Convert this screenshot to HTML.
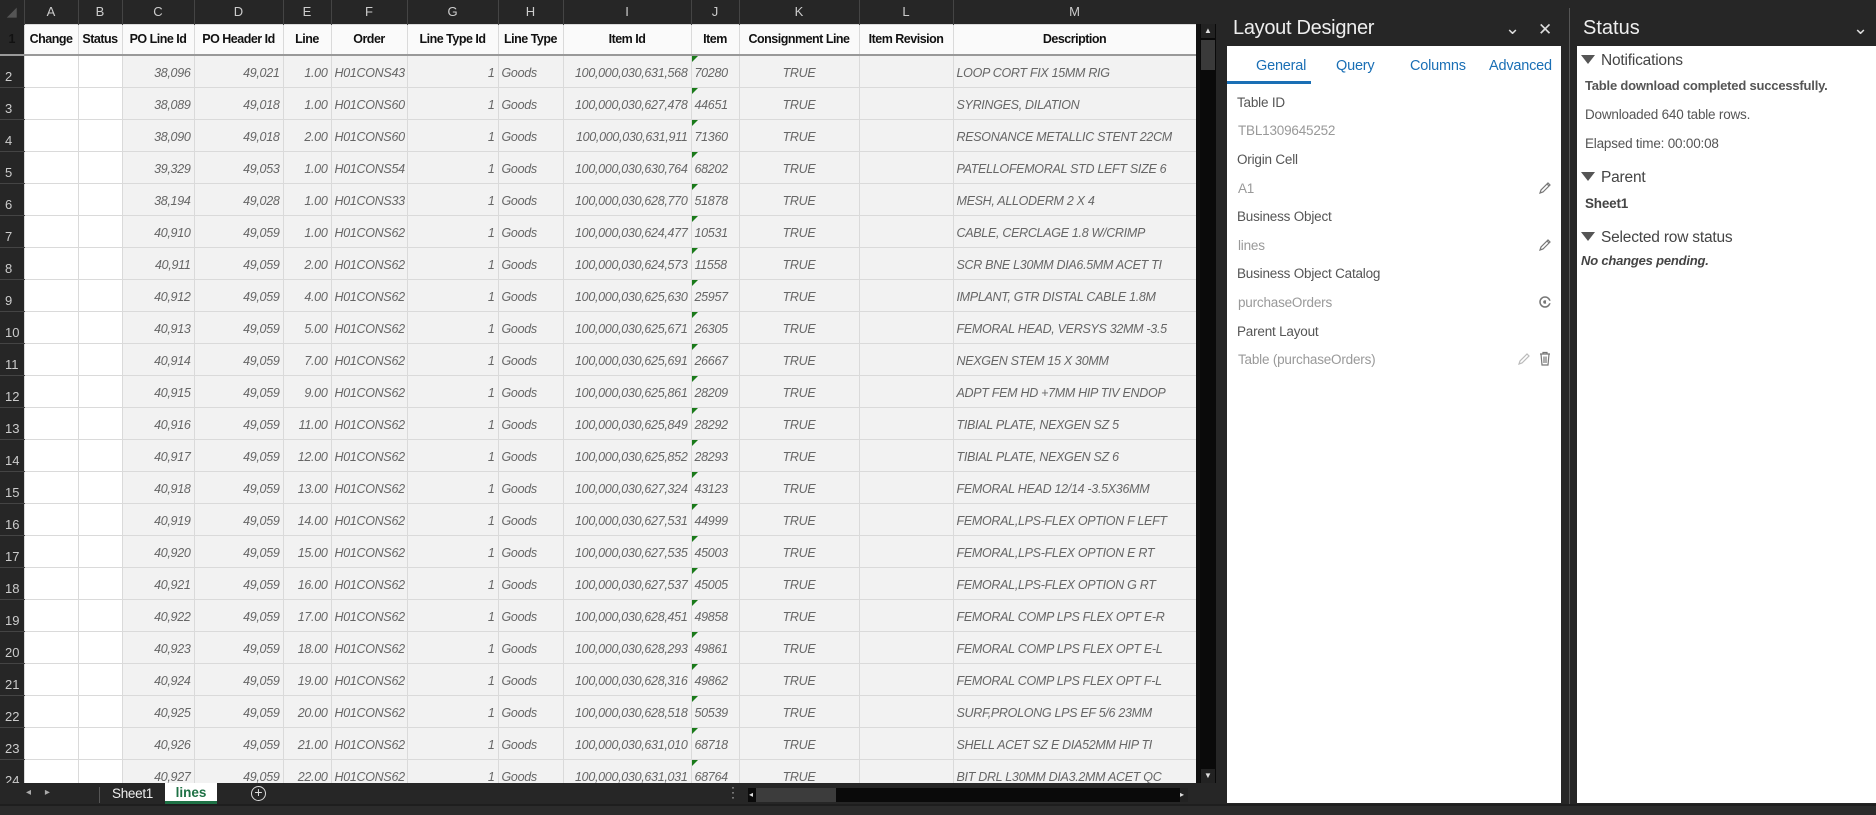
<!DOCTYPE html>
<html><head><meta charset="utf-8"><style>
*{margin:0;padding:0;box-sizing:border-box}
body{width:1876px;height:815px;background:#262626;position:relative;overflow:hidden;font-family:"Liberation Sans",sans-serif}
.gw{position:absolute;left:0;top:0;width:1196px;height:783px;overflow:hidden}
.grid{position:absolute;left:0;top:0;width:1196px;border-collapse:collapse;table-layout:fixed}
.grid td{height:32px;border:1px solid #dadada;font-size:12.5px;letter-spacing:-0.3px;font-style:italic;color:#666;background:#f2f2f2;white-space:nowrap;overflow:hidden;padding:4px 3px 0 3px;position:relative}
.grid tr.ch td{height:24px;background:#262626;color:#ccc;border:none;border-right:1px solid #444;font-style:normal;text-align:center;font-size:13px;padding:0;letter-spacing:0}
.grid tr.h td{height:31px;background:#fafafa;color:#111;font-weight:bold;font-style:normal;text-align:center;border-bottom:2px solid #999;font-size:12.5px;letter-spacing:-0.5px;padding:0 1px}
.grid td.rh{background:#262626!important;color:#ccc;font-style:normal;border:none;border-bottom:1px solid #444;text-align:left;padding:10px 0 0 5px;font-size:13px;letter-spacing:0}
.grid td.w{background:#fff}
.r{text-align:right}.c{text-align:center}
.g::before{content:"";position:absolute;left:0;top:0;border-top:6px solid #1a7a1a;border-right:6px solid transparent}
.vs{position:absolute;left:1200px;top:24px;width:16px;height:759px;background:#0a0a0a}
.panel{position:absolute;background:#fff}
.t{position:absolute;font-size:13.5px;color:#555;letter-spacing:-0.2px}
.v{color:#999}
.tab{position:absolute;font-size:14.5px;color:#1a6fb5;letter-spacing:-0.2px}
.tri{display:inline-block;width:0;height:0;border-left:7px solid transparent;border-right:7px solid transparent;border-top:9px solid #555;margin-right:6px;vertical-align:1px}
</style></head><body>
<div class="gw">
<table class="grid">
<colgroup><col style="width:24px"><col style="width:54px"><col style="width:44px"><col style="width:72px"><col style="width:89px"><col style="width:48px"><col style="width:76px"><col style="width:91px"><col style="width:65px"><col style="width:128px"><col style="width:48px"><col style="width:120px"><col style="width:94px"><col style="width:243px"></colgroup>
<tr class="ch"><td style="color:#555">◢</td><td>A</td><td>B</td><td>C</td><td>D</td><td>E</td><td>F</td><td>G</td><td>H</td><td>I</td><td>J</td><td>K</td><td>L</td><td>M</td></tr>
<tr class="h"><td class="rh">1</td><td>Change</td><td>Status</td><td>PO Line Id</td><td>PO Header Id</td><td>Line</td><td>Order</td><td>Line Type Id</td><td>Line Type</td><td>Item Id</td><td>Item</td><td>Consignment Line</td><td>Item Revision</td><td>Description</td></tr>
<tr><td class="rh">2</td><td class="w"></td><td class="w"></td><td class="r">38,096</td><td class="r">49,021</td><td class="r">1.00</td><td>H01CONS43</td><td class="r">1</td><td>Goods</td><td class="r">100,000,030,631,568</td><td class="g">70280</td><td class="c">TRUE</td><td></td><td>LOOP CORT FIX 15MM RIG</td></tr>
<tr><td class="rh">3</td><td class="w"></td><td class="w"></td><td class="r">38,089</td><td class="r">49,018</td><td class="r">1.00</td><td>H01CONS60</td><td class="r">1</td><td>Goods</td><td class="r">100,000,030,627,478</td><td class="g">44651</td><td class="c">TRUE</td><td></td><td>SYRINGES, DILATION</td></tr>
<tr><td class="rh">4</td><td class="w"></td><td class="w"></td><td class="r">38,090</td><td class="r">49,018</td><td class="r">2.00</td><td>H01CONS60</td><td class="r">1</td><td>Goods</td><td class="r">100,000,030,631,911</td><td class="g">71360</td><td class="c">TRUE</td><td></td><td>RESONANCE METALLIC STENT 22CM</td></tr>
<tr><td class="rh">5</td><td class="w"></td><td class="w"></td><td class="r">39,329</td><td class="r">49,053</td><td class="r">1.00</td><td>H01CONS54</td><td class="r">1</td><td>Goods</td><td class="r">100,000,030,630,764</td><td class="g">68202</td><td class="c">TRUE</td><td></td><td>PATELLOFEMORAL STD LEFT SIZE 6</td></tr>
<tr><td class="rh">6</td><td class="w"></td><td class="w"></td><td class="r">38,194</td><td class="r">49,028</td><td class="r">1.00</td><td>H01CONS33</td><td class="r">1</td><td>Goods</td><td class="r">100,000,030,628,770</td><td class="g">51878</td><td class="c">TRUE</td><td></td><td>MESH, ALLODERM 2 X 4</td></tr>
<tr><td class="rh">7</td><td class="w"></td><td class="w"></td><td class="r">40,910</td><td class="r">49,059</td><td class="r">1.00</td><td>H01CONS62</td><td class="r">1</td><td>Goods</td><td class="r">100,000,030,624,477</td><td class="g">10531</td><td class="c">TRUE</td><td></td><td>CABLE, CERCLAGE 1.8 W/CRIMP</td></tr>
<tr><td class="rh">8</td><td class="w"></td><td class="w"></td><td class="r">40,911</td><td class="r">49,059</td><td class="r">2.00</td><td>H01CONS62</td><td class="r">1</td><td>Goods</td><td class="r">100,000,030,624,573</td><td class="g">11558</td><td class="c">TRUE</td><td></td><td>SCR BNE L30MM DIA6.5MM ACET TI</td></tr>
<tr><td class="rh">9</td><td class="w"></td><td class="w"></td><td class="r">40,912</td><td class="r">49,059</td><td class="r">4.00</td><td>H01CONS62</td><td class="r">1</td><td>Goods</td><td class="r">100,000,030,625,630</td><td class="g">25957</td><td class="c">TRUE</td><td></td><td>IMPLANT, GTR DISTAL CABLE 1.8M</td></tr>
<tr><td class="rh">10</td><td class="w"></td><td class="w"></td><td class="r">40,913</td><td class="r">49,059</td><td class="r">5.00</td><td>H01CONS62</td><td class="r">1</td><td>Goods</td><td class="r">100,000,030,625,671</td><td class="g">26305</td><td class="c">TRUE</td><td></td><td>FEMORAL HEAD, VERSYS 32MM -3.5</td></tr>
<tr><td class="rh">11</td><td class="w"></td><td class="w"></td><td class="r">40,914</td><td class="r">49,059</td><td class="r">7.00</td><td>H01CONS62</td><td class="r">1</td><td>Goods</td><td class="r">100,000,030,625,691</td><td class="g">26667</td><td class="c">TRUE</td><td></td><td>NEXGEN STEM 15 X 30MM</td></tr>
<tr><td class="rh">12</td><td class="w"></td><td class="w"></td><td class="r">40,915</td><td class="r">49,059</td><td class="r">9.00</td><td>H01CONS62</td><td class="r">1</td><td>Goods</td><td class="r">100,000,030,625,861</td><td class="g">28209</td><td class="c">TRUE</td><td></td><td>ADPT FEM HD +7MM HIP TIV ENDOP</td></tr>
<tr><td class="rh">13</td><td class="w"></td><td class="w"></td><td class="r">40,916</td><td class="r">49,059</td><td class="r">11.00</td><td>H01CONS62</td><td class="r">1</td><td>Goods</td><td class="r">100,000,030,625,849</td><td class="g">28292</td><td class="c">TRUE</td><td></td><td>TIBIAL PLATE, NEXGEN SZ 5</td></tr>
<tr><td class="rh">14</td><td class="w"></td><td class="w"></td><td class="r">40,917</td><td class="r">49,059</td><td class="r">12.00</td><td>H01CONS62</td><td class="r">1</td><td>Goods</td><td class="r">100,000,030,625,852</td><td class="g">28293</td><td class="c">TRUE</td><td></td><td>TIBIAL PLATE, NEXGEN SZ 6</td></tr>
<tr><td class="rh">15</td><td class="w"></td><td class="w"></td><td class="r">40,918</td><td class="r">49,059</td><td class="r">13.00</td><td>H01CONS62</td><td class="r">1</td><td>Goods</td><td class="r">100,000,030,627,324</td><td class="g">43123</td><td class="c">TRUE</td><td></td><td>FEMORAL HEAD 12/14 -3.5X36MM</td></tr>
<tr><td class="rh">16</td><td class="w"></td><td class="w"></td><td class="r">40,919</td><td class="r">49,059</td><td class="r">14.00</td><td>H01CONS62</td><td class="r">1</td><td>Goods</td><td class="r">100,000,030,627,531</td><td class="g">44999</td><td class="c">TRUE</td><td></td><td>FEMORAL,LPS-FLEX OPTION F LEFT</td></tr>
<tr><td class="rh">17</td><td class="w"></td><td class="w"></td><td class="r">40,920</td><td class="r">49,059</td><td class="r">15.00</td><td>H01CONS62</td><td class="r">1</td><td>Goods</td><td class="r">100,000,030,627,535</td><td class="g">45003</td><td class="c">TRUE</td><td></td><td>FEMORAL,LPS-FLEX OPTION E RT</td></tr>
<tr><td class="rh">18</td><td class="w"></td><td class="w"></td><td class="r">40,921</td><td class="r">49,059</td><td class="r">16.00</td><td>H01CONS62</td><td class="r">1</td><td>Goods</td><td class="r">100,000,030,627,537</td><td class="g">45005</td><td class="c">TRUE</td><td></td><td>FEMORAL,LPS-FLEX OPTION G RT</td></tr>
<tr><td class="rh">19</td><td class="w"></td><td class="w"></td><td class="r">40,922</td><td class="r">49,059</td><td class="r">17.00</td><td>H01CONS62</td><td class="r">1</td><td>Goods</td><td class="r">100,000,030,628,451</td><td class="g">49858</td><td class="c">TRUE</td><td></td><td>FEMORAL COMP LPS FLEX OPT E-R</td></tr>
<tr><td class="rh">20</td><td class="w"></td><td class="w"></td><td class="r">40,923</td><td class="r">49,059</td><td class="r">18.00</td><td>H01CONS62</td><td class="r">1</td><td>Goods</td><td class="r">100,000,030,628,293</td><td class="g">49861</td><td class="c">TRUE</td><td></td><td>FEMORAL COMP LPS FLEX OPT E-L</td></tr>
<tr><td class="rh">21</td><td class="w"></td><td class="w"></td><td class="r">40,924</td><td class="r">49,059</td><td class="r">19.00</td><td>H01CONS62</td><td class="r">1</td><td>Goods</td><td class="r">100,000,030,628,316</td><td class="g">49862</td><td class="c">TRUE</td><td></td><td>FEMORAL COMP LPS FLEX OPT F-L</td></tr>
<tr><td class="rh">22</td><td class="w"></td><td class="w"></td><td class="r">40,925</td><td class="r">49,059</td><td class="r">20.00</td><td>H01CONS62</td><td class="r">1</td><td>Goods</td><td class="r">100,000,030,628,518</td><td class="g">50539</td><td class="c">TRUE</td><td></td><td>SURF,PROLONG LPS EF 5/6 23MM</td></tr>
<tr><td class="rh">23</td><td class="w"></td><td class="w"></td><td class="r">40,926</td><td class="r">49,059</td><td class="r">21.00</td><td>H01CONS62</td><td class="r">1</td><td>Goods</td><td class="r">100,000,030,631,010</td><td class="g">68718</td><td class="c">TRUE</td><td></td><td>SHELL ACET SZ E DIA52MM HIP TI</td></tr>
<tr><td class="rh">24</td><td class="w"></td><td class="w"></td><td class="r">40,927</td><td class="r">49,059</td><td class="r">22.00</td><td>H01CONS62</td><td class="r">1</td><td>Goods</td><td class="r">100,000,030,631,031</td><td class="g">68764</td><td class="c">TRUE</td><td></td><td>BIT DRL L30MM DIA3.2MM ACET QC</td></tr>
</table>
</div>
<div style="position:absolute;left:1196px;top:0;width:30px;height:804px;background:#262626"></div>
<div class="vs"><div style="position:absolute;left:1px;top:0;width:14px;height:14px;background:#222;color:#ddd;font-size:8px;text-align:center;line-height:14px">▲</div><div style="position:absolute;left:1px;top:16px;width:14px;height:30px;background:#3a3a3a"></div><div style="position:absolute;left:1px;bottom:0;width:14px;height:14px;background:#222;color:#ddd;font-size:8px;text-align:center;line-height:14px">▼</div></div>
<div style="position:absolute;left:1196px;top:24px;width:4px;height:760px;background:#111"></div>
<div style="position:absolute;left:0;top:783px;width:1216px;height:21px;background:#262626"></div>
<div style="position:absolute;left:26px;top:787px;color:#aaa;font-size:10px">◂&nbsp;&nbsp;&nbsp;&nbsp;&nbsp;▸</div>
<div style="position:absolute;left:99px;top:787px;width:1px;height:16px;background:#555"></div>
<div style="position:absolute;left:112px;top:786px;color:#eee;font-size:13.5px;letter-spacing:-0.3px">Sheet1</div>
<div style="position:absolute;left:165px;top:783px;width:52px;height:21px;background:#fff;border-bottom:3px solid #1e7145;color:#1e7145;font-weight:bold;font-size:13.5px;text-align:center;line-height:19px">lines</div>
<div style="position:absolute;left:251px;top:786px;width:15px;height:15px;border:1.5px solid #ddd;border-radius:50%;color:#ddd;font-size:14px;line-height:11px;text-align:center">+</div>
<div style="position:absolute;left:731px;top:785px;color:#ccc;font-size:12px;line-height:5px">·<br>·<br>·</div>
<div style="position:absolute;left:748px;top:788px;width:436px;height:14px;background:#0a0a0a"></div>
<div style="position:absolute;left:756px;top:788px;width:80px;height:14px;background:#3c3c3c"></div>
<div style="position:absolute;left:749px;top:788px;width:8px;height:14px;color:#ddd;font-size:8px;line-height:14px">◂</div>
<div style="position:absolute;left:1180px;top:788px;width:8px;height:14px;background:#222;color:#ddd;font-size:8px;line-height:14px">▸</div>
<div style="position:absolute;left:0;top:804px;width:1876px;height:11px;background:#2b2b2b;border-top:2px solid #1e1e1e"></div>
<!-- Layout designer -->
<div style="position:absolute;left:1233px;top:17px;color:#eee;font-size:20px;letter-spacing:-0.3px">Layout Designer</div>
<div style="position:absolute;left:1505px;top:18px;color:#ddd;font-size:18px">⌄</div>
<div style="position:absolute;left:1538px;top:20px;color:#ddd;font-size:17px">✕</div>
<div style="position:absolute;left:1569px;top:8px;width:1px;height:796px;background:#555"></div>
<div class="panel" style="left:1227px;top:46px;width:334px;height:757px">
<div class="tab" style="left:29px;top:12px">General</div>
<div class="tab" style="left:109px;top:12px">Query</div>
<div class="tab" style="left:183px;top:12px">Columns</div>
<div class="tab" style="left:262px;top:12px">Advanced</div>
<div style="position:absolute;left:0;top:35px;width:84px;height:3px;background:#1a6fb5"></div>
<div class="t" style="left:10px;top:49px">Table ID</div>
<div class="t v" style="left:11px;top:77px">TBL1309645252</div>
<div class="t" style="left:10px;top:106px">Origin Cell</div>
<div class="t v" style="left:11px;top:135px">A1</div>
<div class="t" style="left:10px;top:163px">Business Object</div>
<div class="t v" style="left:11px;top:192px">lines</div>
<div class="t" style="left:10px;top:220px">Business Object Catalog</div>
<div class="t v" style="left:11px;top:249px">purchaseOrders</div>
<div class="t" style="left:10px;top:278px">Parent Layout</div>
<div class="t v" style="left:11px;top:306px">Table (purchaseOrders)</div>
<svg style="position:absolute;left:311px;top:135px" width="14" height="14" viewBox="0 0 14 14"><path d="M2 12 L3 9 L10 2 L12 4 L5 11 Z M9 3 L11 5" fill="none" stroke="#777" stroke-width="1.2"/></svg>
<svg style="position:absolute;left:311px;top:192px" width="14" height="14" viewBox="0 0 14 14"><path d="M2 12 L3 9 L10 2 L12 4 L5 11 Z M9 3 L11 5" fill="none" stroke="#777" stroke-width="1.2"/></svg>
<svg style="position:absolute;left:311px;top:249px" width="14" height="14" viewBox="0 0 14 14"><circle cx="7" cy="7" r="5" fill="none" stroke="#777" stroke-width="1.5"/><circle cx="7" cy="7" r="1.8" fill="#777"/><path d="M8 7 H13" stroke="#fff" stroke-width="2.5"/></svg>
<svg style="position:absolute;left:290px;top:306px" width="14" height="14" viewBox="0 0 14 14"><path d="M2 12 L3 9 L10 2 L12 4 L5 11 Z" fill="none" stroke="#bbb" stroke-width="1.2"/></svg>
<svg style="position:absolute;left:311px;top:305px" width="14" height="15" viewBox="0 0 14 15"><path d="M2 3 H12 M5 3 V1.5 H9 V3 M3 3 L4 14 H10 L11 3 M6 5.5 V12 M8 5.5 V12" fill="none" stroke="#777" stroke-width="1.2"/></svg>
</div>
<!-- Status -->
<div style="position:absolute;left:1583px;top:17px;color:#eee;font-size:20px">Status</div>
<div style="position:absolute;left:1853px;top:18px;color:#ddd;font-size:18px">⌄</div>
<div class="panel" style="left:1577px;top:46px;width:299px;height:757px">
<div class="t" style="left:4px;top:6px;font-size:15.5px;color:#444"><span class="tri"></span>Notifications</div>
<div class="t" style="left:8px;top:32px;font-weight:bold;color:#555;font-size:13px">Table download completed successfully.</div>
<div class="t" style="left:8px;top:61px">Downloaded 640 table rows.</div>
<div class="t" style="left:8px;top:90px">Elapsed time: 00:00:08</div>
<div class="t" style="left:4px;top:123px;font-size:15.5px;color:#444"><span class="tri"></span>Parent</div>
<div class="t" style="left:8px;top:150px;font-weight:bold;color:#444">Sheet1</div>
<div class="t" style="left:4px;top:183px;font-size:15.5px;color:#444"><span class="tri"></span>Selected row status</div>
<div class="t" style="left:4px;top:207px;font-weight:bold;font-style:italic;color:#444;font-size:13px">No changes pending.</div>
</div>
</body></html>
